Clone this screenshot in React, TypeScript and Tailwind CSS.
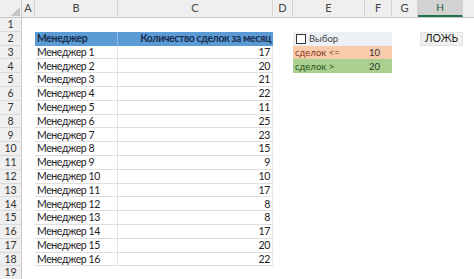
import React from "react";

const COLS = ["A", "B", "C", "D", "E", "F", "G", "H"];
const W = [
  "w-[13px]",
  "w-[83px]",
  "w-[155px]",
  "w-[20px]",
  "w-[72px]",
  "w-[27px]",
  "w-[26px]",
  "w-[45px]",
];

const DATA = [17, 20, 21, 22, 11, 25, 23, 15, 9, 10, 17, 8, 8, 17, 20, 22];

function RowHead({ n }: { n: number }) {
  return (
    <div className="w-[22px] shrink-0 h-full bg-[#efefef] border-r border-[#c8c8c8] border-b border-b-[#dadada] flex items-center justify-center text-[10.5px] text-[#333] tracking-normal">
      {n}
    </div>
  );
}

export default function App() {
  const rows: React.ReactNode[] = [];
  for (let r = 1; r <= 19; r++) {
    let b: React.ReactNode = null;
    let c: React.ReactNode = null;
    let e: React.ReactNode = null;
    let h: React.ReactNode = null;
    if (r === 2) {
      b = (
        <div className={`${W[1]} h-full bg-[#5b9bd5] flex items-center pl-[2px] font-bold text-[#1b2f4e] border-r border-[#8fb8e3]`}>
          Менеджер
        </div>
      );
      c = (
        <div className={`${W[2]} h-full bg-[#5b9bd5] flex items-center justify-end pr-[2px] font-bold text-[#1b2f4e] whitespace-nowrap`}>
          Количество сделок за месяц
        </div>
      );
      e = (
        <div className="w-[99px] h-full bg-[#edf1f6] flex items-center pl-[3px] gap-[3px] text-[9.5px] text-[#444] tracking-normal">
          <div className="w-[10px] h-[10px] bg-white border border-[#333]" />
          <span>Выбор</span>
        </div>
      );
      h = (
        <div className={`${W[7]} h-full flex items-center justify-end`}>
          <div className="w-[43px] h-full bg-[#f0f0f0] border border-[#e2e2e2] flex items-center justify-center text-[10.5px] text-[#222] tracking-normal">
            ЛОЖЬ
          </div>
        </div>
      );
    } else if (r >= 3 && r <= 18) {
      b = (
        <div className={`${W[1]} h-full bg-white flex items-center pl-[2px] text-[#222] border-b border-[#dedede] border-r border-r-[#e2e2e2]`}>
          Менеджер {r - 2}
        </div>
      );
      c = (
        <div className={`${W[2]} h-full bg-white flex items-center justify-end pr-[2px] text-[#222] border-b border-[#dedede] border-r border-r-[#e8e8e8]`}>
          {DATA[r - 3]}
        </div>
      );
    }
    if (r === 3) {
      e = (
        <div className="w-[99px] h-full bg-[#f8cbad] flex items-center justify-between pl-[2px] pr-[12px] text-[9.5px] tracking-normal">
          <span className="text-[#8a3a1c]">сделок &lt;=</span>
          <span className="text-[#333]">10</span>
        </div>
      );
    } else if (r === 4) {
      e = (
        <div className="w-[99px] h-full bg-[#a9d08e] flex items-center justify-between pl-[2px] pr-[12px] text-[9.5px] tracking-normal">
          <span className="text-[#2f5223]">сделок &gt;</span>
          <span className="text-[#333]">20</span>
        </div>
      );
    }
    rows.push(
      <div key={r} className="flex h-[13.8px] items-stretch text-[10.5px] leading-none tracking-[-0.4px]">
        <RowHead n={r} />
        <div className={`${W[0]} shrink-0`} />
        {b && c ? (
          <>
            <div className="shrink-0 h-full">{b}</div>
            <div className="shrink-0 h-full">{c}</div>
          </>
        ) : (
          <div className="w-[238px] shrink-0" />
        )}
        <div className={`${W[3]} shrink-0`} />
        <div className="shrink-0 w-[99px] h-full">{e}</div>
        <div className={`${W[6]} shrink-0`} />
        <div className="shrink-0 h-full">{h ?? <div className={W[7]} />}</div>
      </div>
    );
  }

  return (
    <div
      className="w-[474px] h-[279px] overflow-hidden bg-white"
      style={{ fontFamily: "Lato, 'Liberation Sans', sans-serif" }}
    >
      <div className="flex h-[18px] bg-[#efefef] border-b border-[#c8c8c8] text-[11px] text-[#444]">
        <div className="w-[22px] shrink-0 relative border-r border-[#c8c8c8]">
          <svg className="absolute left-[11px] top-[7px]" width="9" height="9" viewBox="0 0 9 9">
            <polygon points="9,0 9,9 0,9" fill="#c4c4c4" />
          </svg>
        </div>
        {COLS.map((c, i) => (
          <div
            key={c}
            className={`${W[i]} shrink-0 flex items-center justify-center border-r border-[#d4d4d4] ${
              c === "H" ? "bg-[#d2d2d2] border-b-2 border-b-[#217346] text-[#215a3a] text-[10px]" : ""
            }`}
          >
            {c}
          </div>
        ))}
        <div className="flex-1" />
      </div>
      {rows}
    </div>
  );
}
